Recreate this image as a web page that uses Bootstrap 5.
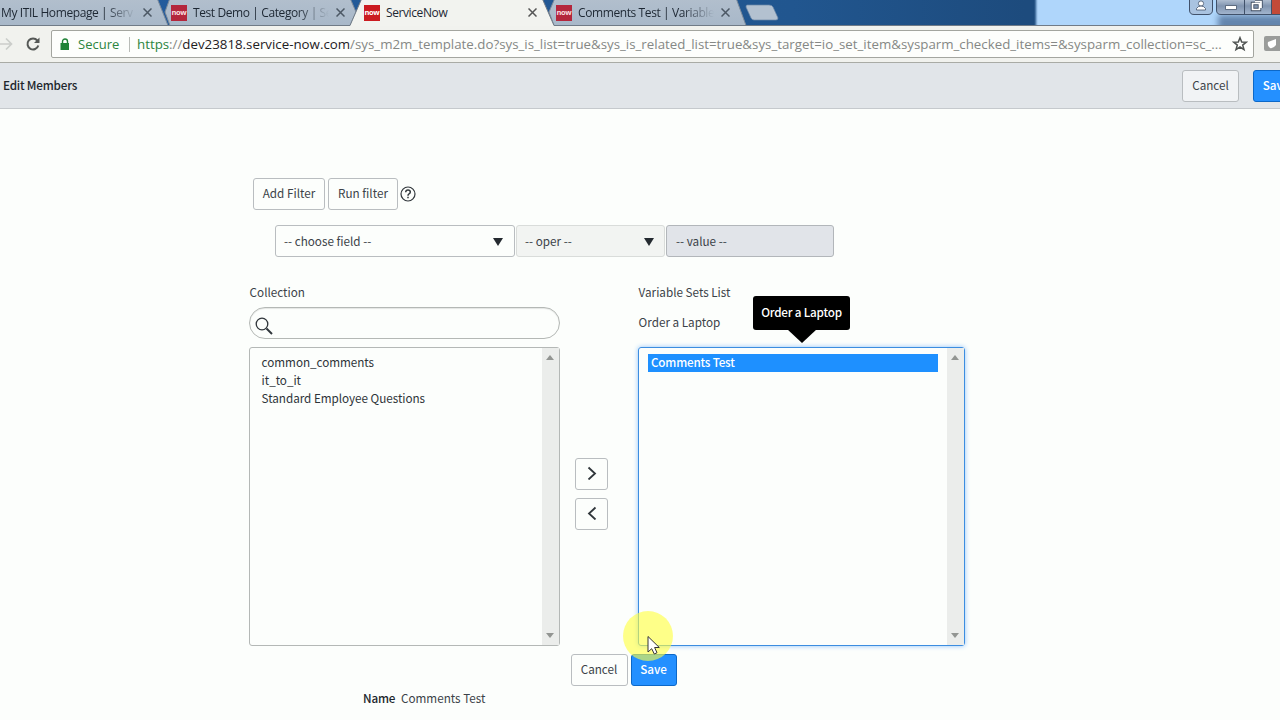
<!DOCTYPE html>
<html lang="en">
<head>
<meta charset="utf-8">
<meta name="viewport" content="width=device-width, initial-scale=1">
<title>ServiceNow</title>
<link href="https://cdn.jsdelivr.net/npm/bootstrap@5.3.0/dist/css/bootstrap.min.css" rel="stylesheet">
<style>
body{width:1280px;height:720px;overflow:hidden;background:#fcfefc;color:#3b4248;font:11.7px/18px "Noto Sans CJK SC",sans-serif}
.chrome-ui{font-family:"Open Sans","Noto Sans",sans-serif}
.tabstrip{height:26px;overflow:hidden}
.strip-art{left:0;top:0}
.tab-item{height:25px;font-size:12px;line-height:23px;color:#1d2733;white-space:nowrap;letter-spacing:-.4px}
.fade-end{-webkit-mask-image:linear-gradient(90deg,#000 calc(100% - 32px),transparent);mask-image:linear-gradient(90deg,#000 calc(100% - 32px),transparent)}
.fav{width:16px;height:16px;flex:none;background:#b4263c;color:#f8dfe0;font:bold 7.5px/15px "Open Sans",sans-serif;text-align:center;letter-spacing:-.4px}
.fav.on{background:#cb1b20;color:#fff}
.toolbar{height:37px;background:#f1f2ee;border-bottom:1px solid #a9aba5}
.urlbox{width:1203px;height:28px;border:1px solid #a3a59f;border-radius:2px;background:#fdfefc;font-size:13px;line-height:26px;white-space:nowrap}
.secure{color:#2c8540}
.url-rest{color:#858885;font-size:13.3px}
.url-host{color:#1d201e}
.vsep{width:1px;height:15px;background:#b9bcb8}
.page-head{height:46px;background:#e1e5e9;border-bottom:1px solid #c5c9cd}
.head-title{font-weight:500;color:#20262c;letter-spacing:-.2px}
.btn-sn{height:32px;padding:0 0 2px;border:1px solid #b9bdc0;border-radius:3px;font-size:11.7px;line-height:28px;color:#3b4248;background:#fcfefc;white-space:nowrap}
.btn-sn.soft{background:#f1f3f5}
.btn-sn.blue{background:#2490ff;border-color:#0c68c8;color:#fff;font-weight:500}
.field{height:32px;border:1px solid #b9bdc0;border-radius:3px;line-height:28px}
.field span{padding-bottom:1px}
.w-field{width:240px}.w-oper{width:149px}.w-val{width:168px}
.oper{background:#f2f4f2;border-color:#d9dcda}
.val{background:#e1e4e9;border-color:#b2b6ba;line-height:30px}
.lbl{height:18px;padding-left:.6px}
.left-col{width:311px}.mid-col{width:33px}.right-col{width:327px}
.search{height:32px;border:1px solid #b4b8b5;border-radius:16px;box-shadow:inset 0 1px 1px #e4e6e4}
.listbox-sn{height:299px;border:1px solid #b4b8b6;border-radius:3px}
.listbox-sn.focus{border-color:#3c8de0;box-shadow:0 0 5px #8fc3fb}
.opt{height:18px;line-height:15px;color:#2e3439;letter-spacing:-.03px}
.sel{background:#1e90ff;color:#fff;font-weight:500;letter-spacing:-.2px}
.sbar{width:17px;background:#ebedeb}
.tip{left:753px;top:296px;width:97px;height:34px;background:#000;color:#fff;border-radius:3px;font-weight:500;line-height:31px;letter-spacing:-.2px}
.tip-tail{left:787px;top:329px}
.halo{left:623px;top:611px;width:50px;height:50px;border-radius:50%;background:#ffff40;opacity:.62}
.pointer{left:647px;top:635px}
svg{display:block;flex:none}
</style>
</head>
<body>
<header class="chrome-ui">
  <div class="tabstrip position-relative">
    <svg class="strip-art position-absolute" width="1280" height="26" viewBox="0 0 1280 26">
      <defs>
        <linearGradient id="sky"><stop offset="0" stop-color="#235c9f"/><stop offset=".62" stop-color="#21568f"/><stop offset=".8" stop-color="#1d4b7d"/></linearGradient>
        <linearGradient id="inactive" x2="0" y2="1"><stop offset="0" stop-color="#b2bfcd"/><stop offset="1" stop-color="#a8b8c9"/></linearGradient>
        <linearGradient id="wbtn" x2="0" y2="1"><stop offset="0" stop-color="#b6c4d6"/><stop offset=".45" stop-color="#8195b0"/><stop offset="1" stop-color="#a3b6cf"/></linearGradient>
        <filter id="soft"><feGaussianBlur stdDeviation="3"/></filter>
        <filter id="edge"><feGaussianBlur stdDeviation="1.200"/></filter>
      </defs>
      <rect width="1280" height="26" fill="url(#sky)"/>
      <rect x="1036" y="-10" width="260" height="46" fill="#afd6fb" filter="url(#edge)"/>
      <path d="M1218 15h70v20h-70z" fill="#6485ad" filter="url(#soft)"/>
      <g fill="url(#inactive)" stroke="#7e8b9a">
        <path d="M-5-2H157L168 25.5H-5zM170-2L165 12L170 25.5H350L356 12L350-2zM555-2L549 12L554 25.5H746L736-2z"/>
      </g>
      <path d="M747 5H769Q772 5 773 7L778 18Q778 20 776 20H754Q752 20 751 18L746 7Q746 5 747 5z" fill="#b3c1d0" stroke="#6c87a8" stroke-width=".7"/>
      <path d="M0 25.5H350L362-2H542L554 25.5H1280V27H0z" fill="#f2f3ef" stroke="#707b87"/>
      <path d="M351 26L363-1H541L553 26z" fill="#f2f3ef"/>
      <g fill="url(#wbtn)" stroke="#40516a">
        <path d="M1189.500-1V10Q1189.500 14.500 1194 14.500H1208Q1212.500 14.500 1212.500 10V-1z" fill="#a9c3e0"/>
        <path d="M1216.500-1V10Q1216.500 14.500 1221 14.500H1281V-1zM1244.500-1V14"/>
      </g>
      <path d="M1272-1H1281V14H1272z" fill="#c34a38"/><path d="M1271.500 0V14" stroke="#40516a"/>
      <g fill="#fff" stroke="#44536a" stroke-width=".8"><circle cx="1201" cy="3.500" r="2.600"/><path d="M1196.500 10V8.500Q1198 6 1201 6T1205.500 8.500V10z"/><path d="M1225.500 5.500H1236.500V9.500H1225.500z"/></g>
      <path d="M1255 1.500H1261V8M1252.500 3.500H1259.500V9.500H1252.500z" fill="none" stroke="#3d4b60" stroke-width="3.400"/>
      <path d="M1255 1.500H1261V8M1252.500 3.500H1259.500V9.500H1252.500z" fill="none" stroke="#fff" stroke-width="1.700"/>
    </svg>
    <div class="d-flex position-relative">
      <div class="tab-item d-flex align-items-center" style="width:171px"><span class="ttl fade-end" style="width:136px;padding-left:1px">My ITIL Homepage | Serv</span><svg style="margin-left:7px" width="9" height="9"><path d="M.5.5l8 8m0-8l-8 8" stroke="#4c5865" stroke-width="1.500"/></svg></div>
      <div class="tab-item d-flex align-items-center" style="width:193px"><span class="fav">now</span><span class="ttl fade-end" style="width:136px;margin-left:6px">Test Demo | Category | Se</span><svg style="margin-left:7px" width="9" height="9"><path d="M.5.5l8 8m0-8l-8 8" stroke="#4c5865" stroke-width="1.500"/></svg></div>
      <div class="tab-item d-flex align-items-center" style="width:192px"><span class="fav on">now</span><span class="ttl" style="width:136px;margin-left:6px">ServiceNow</span><svg style="margin-left:6px" width="9" height="9"><path d="M.5.5l8 8m0-8l-8 8" stroke="#555" stroke-width="1.500"/></svg></div>
      <div class="tab-item d-flex align-items-center" style="width:192px"><span class="fav">now</span><span class="ttl fade-end" style="width:136px;margin-left:6px">Comments Test | Variable</span><svg style="margin-left:7px" width="9" height="9"><path d="M.5.5l8 8m0-8l-8 8" stroke="#4c5865" stroke-width="1.500"/></svg></div>
    </div>
  </div>
  <div class="toolbar d-flex align-items-center">
    <svg width="51" height="28" fill="none"><path d="M0 14H11M6 8.500L11.500 14L6 19.500" stroke="#cbcdca" stroke-width="1.700"/><path d="M37.300 10.500A5.500 5.500 0 1 0 38.300 15.500" stroke="#555856" stroke-width="2"/><path d="M39.500 7.500V13H34z" fill="#555856"/></svg>
    <div class="urlbox d-flex align-items-center">
      <svg class="ms-2" width="10" height="13"><path d="M2.500 6V3.500a2.500 2.500 0 0 1 5 0V6" fill="none" stroke="#208337" stroke-width="1.400"/><rect x=".5" y="5" width="8.500" height="7" fill="#208337"/></svg>
      <span class="secure" style="margin-left:8px;width:41px">Secure</span><span class="vsep" style="margin:0 7px 0 10px"></span>
      <span class="url-rest" style="width:1095px"><span class="secure">https</span>://<span class="url-host">dev23818.service-now.com</span>/sys_m2m_template.do?sys_is_list=true&amp;sys_is_related_list=true&amp;sys_target=io_set_item&amp;sysparm_checked_items=&amp;sysparm_collection=sc_...</span>
      <svg width="16" height="16"><path d="M8 1.700l1.700 4.300 4.600.2-3.600 2.900 1.300 4.500L8 11l-4 2.600 1.300-4.500L1.700 6.200l4.600-.2z" fill="none" stroke="#4f5351" stroke-width="1.500"/></svg>
    </div>
    <svg style="margin-left:10px" width="16" height="16"><rect width="20" height="15" rx="2" fill="#9a9c9a"/><path d="M4 6L12 3V9Q9 13 6 12Q3 10 4 6z" fill="#fff"/></svg>
  </div>
</header>

<div class="page-head d-flex align-items-center overflow-hidden">
  <span class="head-title" style="padding:0 0 2px 3px;width:1182px;flex:none">Edit Members</span>
  <button class="btn btn-sn soft flex-shrink-0" style="width:57px">Cancel</button>
  <button class="btn btn-sn blue flex-shrink-0" style="width:46px;margin-left:14px">Save</button>
</div>

<main>
  <div class="d-flex align-items-center" style="padding:69px 0 0 253px">
    <button class="btn btn-sn" style="width:72px">Add Filter</button>
    <button class="btn btn-sn" style="width:70px;margin-left:3px">Run filter</button>
    <svg style="margin-left:2px" width="16" height="16" fill="none" stroke="#30363b"><circle cx="8" cy="8" r="7" stroke-width="1.200"/><path d="M5.700 6.200Q5.800 4 8 4T10.300 6Q10.300 7.200 9 7.900Q8 8.400 8 9.700M8 10.800V12.200" stroke-width="1.500"/></svg>
  </div>
  <div class="d-flex" style="padding:15px 0 0 275px">
    <div class="field w-field d-flex align-items-center justify-content-between" style="padding:0 11px 0 8px"><span>-- choose field --</span><svg width="10" height="9"><path d="M0 1H10L5 9z" fill="#242a30"/></svg></div>
    <div class="field w-oper oper d-flex align-items-center justify-content-between" style="padding:0 10px 0 8px;margin-left:1px"><span>-- oper --</span><svg width="10" height="9"><path d="M0 1H10L5 9z" fill="#242a30"/></svg></div>
    <div class="field w-val val" style="padding-left:9px;margin-left:1px">-- value --</div>
  </div>
  <div class="d-flex" style="padding:26px 0 0 249px">
    <section class="left-col">
      <div class="lbl">Collection</div>
      <div class="search" style="margin-top:6px"><svg width="30" height="30" fill="none" stroke="#30363b"><circle cx="12" cy="16" r="5.800" stroke-width="1.300"/><path d="M16.500 20.500L22 26" stroke-width="2"/></svg></div>
      <div class="listbox-sn d-flex" style="margin-top:8px">
        <div class="flex-grow-1" style="padding:6px 0 0 11.600px"><div class="opt">common_comments</div><div class="opt">it_to_it</div><div class="opt">Standard Employee Questions</div></div>
        <div class="sbar d-flex flex-column justify-content-between align-items-center" style="padding:7px 1px 7px 0"><svg width="8" height="5"><path d="M0 5L4 0L8 5z" fill="#929592"/></svg><svg width="8" height="5"><path d="M0 0L4 5L8 0z" fill="#929592"/></svg></div>
      </div>
    </section>
    <div class="mid-col d-flex flex-column" style="margin:175px 30px 0 15px;gap:8px">
      <button class="btn btn-sn d-flex align-items-center justify-content-center"><svg width="10" height="14"><path d="M1.500 1.500L8 7.500L1.500 13.500" fill="none" stroke="#30363b" stroke-width="1.800"/></svg></button>
      <button class="btn btn-sn d-flex align-items-center justify-content-center"><svg width="10" height="14"><path d="M8.500 1.500L2 7.500L8.500 13.500" fill="none" stroke="#30363b" stroke-width="1.800"/></svg></button>
    </div>
    <section class="right-col">
      <div class="lbl">Variable Sets List</div>
      <div class="lbl" style="margin-top:12px">Order a Laptop</div>
      <div class="listbox-sn focus d-flex" style="margin-top:16px">
        <div class="flex-grow-1" style="padding:6px 9px 0 9px"><div class="opt sel" style="padding-left:3px">Comments Test</div></div>
        <div class="sbar d-flex flex-column justify-content-between align-items-center" style="padding:7px 1px 7px 0"><svg width="8" height="5"><path d="M0 5L4 0L8 5z" fill="#929592"/></svg><svg width="8" height="5"><path d="M0 0L4 5L8 0z" fill="#929592"/></svg></div>
      </div>
    </section>
  </div>
  <div class="d-flex" style="padding:8px 0 0 570.500px;gap:3px">
    <button class="btn btn-sn" style="width:57px">Cancel</button>
    <button class="btn btn-sn blue" style="width:46px">Save</button>
  </div>
  <div class="d-flex" style="padding:3px 0 0 363px"><span class="head-title" style="width:38px">Name</span><span>Comments Test</span></div>
</main>

<div class="tip position-absolute text-center">Order a Laptop</div>
<svg class="tip-tail position-absolute" width="30" height="15"><path d="M0 0H30L15 14z"/></svg>
<div class="halo position-absolute"></div>
<svg class="pointer position-absolute" width="14" height="21"><path d="M1 1.500V17L4.700 13.700L7.300 19L10 17.700L7.600 12.500H12.300z" fill="#fff" stroke="#333"/></svg>
</body>
</html>
